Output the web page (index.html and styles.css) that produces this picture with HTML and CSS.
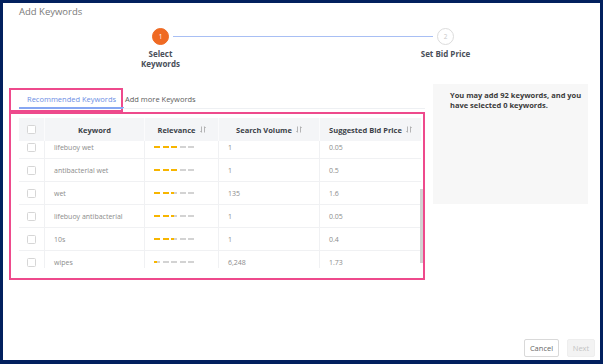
FILE: index.html
```html
<!DOCTYPE html>
<html>
<head>
<meta charset="utf-8">
<link rel="stylesheet" href="styles.css">
</head>
<body>
<div class="frame">
  <div class="panel">
    <div class="title">Add Keywords</div>
    <div class="stepper">
      <div class="step">
        <div class="circle active">1</div>
        <div class="step-label">Select<br>Keywords</div>
      </div>
      <div class="connector"></div>
      <div class="step">
        <div class="circle">2</div>
        <div class="step-label">Set Bid Price</div>
      </div>
    </div>
    <div class="main">
      <div class="left">
        <div class="tabs">
          <div class="tab-box"><div class="tab">Recommended Keywords</div></div>
          <div class="tab-rest">Add more Keywords</div>
        </div>
        <div class="table-box">
          <div class="table">
            <div class="row head">
              <div class="cell"><span class="check"></span></div>
              <div class="cell">Keyword</div>
              <div class="cell">Relevance <svg class="sort" viewBox="0 0 6 7"><path d="M1.5 0.5V6.3M0.3 5L1.5 6.3M4.5 6.5V0.7M5.7 2L4.5 0.7" fill="none" stroke="#9a9a9a" stroke-width="0.7"/></svg></div>
              <div class="cell">Search Volume <svg class="sort" viewBox="0 0 6 7"><path d="M1.5 0.5V6.3M0.3 5L1.5 6.3M4.5 6.5V0.7M5.7 2L4.5 0.7" fill="none" stroke="#9a9a9a" stroke-width="0.7"/></svg></div>
              <div class="cell">Suggested Bid Price <svg class="sort" viewBox="0 0 6 7"><path d="M1.5 0.5V6.3M0.3 5L1.5 6.3M4.5 6.5V0.7M5.7 2L4.5 0.7" fill="none" stroke="#9a9a9a" stroke-width="0.7"/></svg></div>
            </div>
            <div class="tbody">
              <div class="tbody-inner">
                <div class="row">
                  <div class="cell"><span class="check"></span></div>
                  <div class="cell">lifebuoy wet</div>
                  <div class="cell"><div class="bars"><i class="on"></i><i class="on"></i><i class="on"></i><i></i><i></i></div></div>
                  <div class="cell">1</div>
                  <div class="cell">0.05</div>
                </div>
                <div class="row">
                  <div class="cell"><span class="check"></span></div>
                  <div class="cell">antibacterial wet</div>
                  <div class="cell"><div class="bars"><i class="on"></i><i class="on"></i><i class="on"></i><i></i><i></i></div></div>
                  <div class="cell">1</div>
                  <div class="cell">0.5</div>
                </div>
                <div class="row">
                  <div class="cell"><span class="check"></span></div>
                  <div class="cell">wet</div>
                  <div class="cell"><div class="bars"><i class="on"></i><i class="on"></i><i class="half"></i><i></i><i></i></div></div>
                  <div class="cell">135</div>
                  <div class="cell">1.6</div>
                </div>
                <div class="row">
                  <div class="cell"><span class="check"></span></div>
                  <div class="cell">lifebuoy antibacterial</div>
                  <div class="cell"><div class="bars"><i class="on"></i><i class="on"></i><i class="half"></i><i></i><i></i></div></div>
                  <div class="cell">1</div>
                  <div class="cell">0.05</div>
                </div>
                <div class="row">
                  <div class="cell"><span class="check"></span></div>
                  <div class="cell">10s</div>
                  <div class="cell"><div class="bars"><i class="on"></i><i class="on"></i><i class="half"></i><i></i><i></i></div></div>
                  <div class="cell">1</div>
                  <div class="cell">0.4</div>
                </div>
                <div class="row">
                  <div class="cell"><span class="check"></span></div>
                  <div class="cell">wipes</div>
                  <div class="cell"><div class="bars"><i class="half"></i><i></i><i></i><i></i><i></i></div></div>
                  <div class="cell">6,248</div>
                  <div class="cell">1.73</div>
                </div>
              </div>
            </div>
          </div>
          <div class="scroll-thumb"></div>
        </div>
      </div>
      <div class="info">You may add 92 keywords, and you have selected 0 keywords.</div>
    </div>
    <div class="footer">
      <button class="btn cancel">Cancel</button>
      <button class="btn next">Next</button>
    </div>
  </div>
</div>
</body>
</html>
```
FILE: styles.css
```css
* { box-sizing: border-box; }
html, body { margin: 0; padding: 0; }
body {
  width: 603px;
  height: 364px;
  background: #02205e;
  font-family: "Open Sans", "Noto Sans", sans-serif;
  overflow: hidden;
}
.frame {
  padding: 3px 3px 4px 3px;
  height: 364px;
}
.panel {
  background: #fff;
  height: 357px;
  display: flex;
  flex-direction: column;
}
.title {
  padding: 2px 0 0 16px;
  font-size: 9.5px;
  line-height: 13px;
  color: #7a7a7a;
}
.stepper {
  display: flex;
  align-items: flex-start;
  margin-top: 9.5px;
  padding: 0 146px 0 149px;
}
.step {
  width: 17px;
  display: flex;
  flex-direction: column;
  align-items: center;
}
.circle {
  width: 17px;
  height: 17px;
  border-radius: 50%;
  border: 1px solid #dcdcdc;
  color: #c8c8c8;
  font-size: 6.5px;
  line-height: 15px;
  text-align: center;
  flex: none;
}
.circle.active {
  background: #ef6a23;
  border-color: #ef6a23;
  color: #fff;
}
.step-label {
  margin-top: 4.5px;
  white-space: nowrap;
  text-align: center;
  font-size: 8px;
  line-height: 10px;
  font-weight: 700;
  color: #4a4f5a;
}
.connector {
  flex: 1;
  height: 1px;
  background: #a8bff4;
  margin: 8px 4px 0;
}
.main {
  display: flex;
  align-items: flex-start;
  margin-top: 15px;
  padding-left: 6px;
  gap: 8px;
}
.left {
  width: 416px;
  margin-top: 4px;
}
.tabs {
  display: flex;
  align-items: flex-start;
}
.tab-box {
  display: flex;
  align-items: flex-start;
  width: 114px;
  height: 24px;
  border: 2px solid #ee4a8c;
  padding-left: 8px;
}
.tab {
  padding: 3px 8px 2px;
  font-size: 7.5px;
  line-height: 12px;
  color: #6d8ee4;
  border-bottom: 2px solid #86a6f2;
  white-space: nowrap;
}
.tab-rest {
  flex: 1;
  height: 21px;
  padding: 5px 0 0 2px;
  font-size: 7.5px;
  line-height: 12px;
  color: #5c5c5c;
  border-bottom: 1px solid #eef0f3;
}
.table-box {
  position: relative;
  border: 2px solid #ee4a8c;
  padding: 4px 2px 10px 8px;
  height: 168px;
}
.row {
  display: grid;
  grid-template-columns: 25px 100px 74px 101px 102px;
  height: 23px;
  border-bottom: 1px solid #f0f1f3;
}
.cell {
  display: flex;
  align-items: center;
  padding-left: 9px;
  font-size: 7px;
  color: #8c8c8c;
  border-left: 1px solid #f0f1f3;
  white-space: nowrap;
}
.row .cell:first-child {
  border-left: none;
  padding-left: 0;
  justify-content: center;
}
.row.head {
  background: #f4f5f7;
  border-bottom: none;
}
.row.head .cell {
  justify-content: center;
  padding-left: 0;
  font-size: 7.5px;
  font-weight: 700;
  color: #3b3f47;
  border-left: 1px solid #fbfbfc;
}
.row.head .cell:first-child { border-left: none; }
.sort {
  width: 6px;
  height: 7px;
  margin-left: 4px;
}
.check {
  display: block;
  width: 9px;
  height: 9px;
  border: 1px solid #d6d6d6;
  border-radius: 1.5px;
  background: #fff;
}
.tbody {
  height: 127px;
  overflow: hidden;
}
.tbody-inner {
  margin-top: -5px;
}
.bars {
  display: flex;
  gap: 2.5px;
}
.bars i {
  display: block;
  width: 6px;
  height: 2.5px;
  background: #d3d3d3;
}
.bars i.on { background: #f7b500; }
.bars i.half { background: linear-gradient(90deg, #f7b500 50%, #d3d3d3 50%); }
.scroll-thumb {
  position: absolute;
  right: 0;
  top: 75px;
  width: 3px;
  height: 74px;
  background: #d2d2d2;
}
.info {
  width: 155px;
  height: 120px;
  background: #f7f7f7;
  padding: 7px 3px 0 17px;
  font-size: 7.5px;
  line-height: 9.5px;
  font-weight: 700;
  color: #3a3a3a;
}
.footer {
  margin-top: auto;
  display: flex;
  justify-content: flex-end;
  gap: 8px;
  padding: 0 5px 3px 0;
}
.btn {
  height: 18px;
  border-radius: 2px;
  font-family: inherit;
  font-size: 7.5px;
  padding: 0;
}
.cancel {
  width: 35px;
  background: #fff;
  border: 1px solid #d9d9d9;
  color: #666;
}
.next {
  width: 28px;
  background: #f3f3f3;
  border: 1px solid #eeeeee;
  color: #c4c4c4;
}
```
